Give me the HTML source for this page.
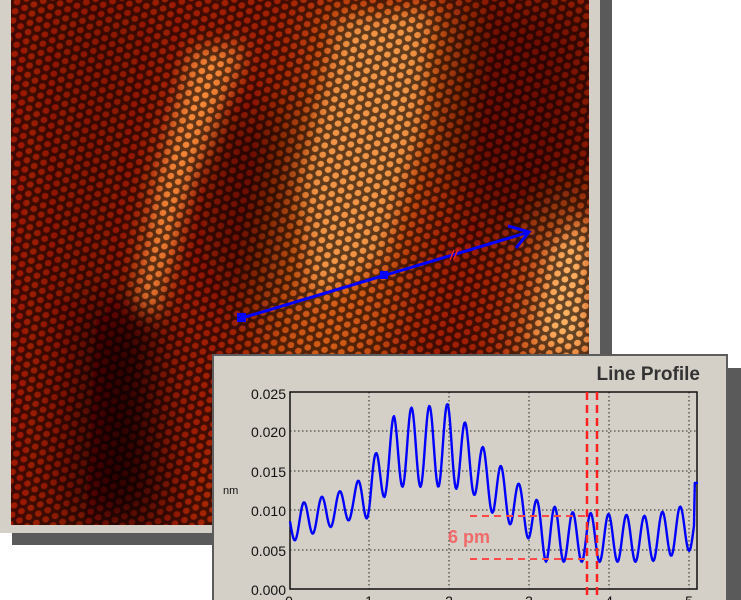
<!DOCTYPE html>
<html><head><meta charset="utf-8"><style>
html,body{margin:0;padding:0;background:#fff;width:741px;height:600px;overflow:hidden;position:relative;font-family:"Liberation Sans",sans-serif}
.a{position:absolute}
</style></head><body>
<div class="a" style="left:600px;top:0;width:12px;height:545px;background:#5a5a5a"></div>
<div class="a" style="left:12px;top:533px;width:600px;height:12px;background:#5a5a5a"></div>
<div class="a" style="left:0;top:0;width:600px;height:533px;background:#d4d0c8"></div>
<svg class="a" style="left:11px;top:0" width="578" height="525" viewBox="0 0 578 525">
<defs>
<filter id="b" x="-50%" y="-50%" width="200%" height="200%"><feGaussianBlur stdDeviation="24"/></filter>
<filter id="b2" x="-50%" y="-50%" width="200%" height="200%"><feGaussianBlur stdDeviation="10"/></filter>
<pattern id="p" width="10" height="16" patternUnits="userSpaceOnUse" patternTransform="rotate(-20)">
<path fill-rule="evenodd" fill="#000" fill-opacity="0.6" d="M0 0H10V16H0Z M1.6 4a3.4 3.1 0 1 0 6.8 0a3.4 3.1 0 1 0 -6.8 0Z M-3.4 12a3.4 3.1 0 1 0 6.8 0a3.4 3.1 0 1 0 -6.8 0Z M6.6 12a3.4 3.1 0 1 0 6.8 0a3.4 3.1 0 1 0 -6.8 0Z"/>
</pattern>
</defs>
<rect width="578" height="525" fill="#a01e02"/>
<g filter="url(#b)">
<path d="M30 0H150L120 200L90 525H30Z" fill="#8a1400"/>
<path d="M70 300L140 300L150 525L60 525Z" fill="#250000"/>
<path d="M200 120L300 100L300 300L230 320L190 250Z" fill="#6a0a00"/>
<path d="M300 0H440L420 160L380 330L330 525L210 525L260 330L290 160Z" fill="#d05a14"/>
<path d="M440 0H578V210L480 240L430 160Z" fill="#700c00"/>
<path d="M520 260L578 200V420L500 380Z" fill="#e88030"/>
</g>
<g filter="url(#b2)">
<path d="M180 50L235 45L175 200L145 320L125 300L145 180Z" fill="#f58838"/>
<path d="M330 20L420 10L410 130L370 260L300 300L290 180Z" fill="#f09444"/>
<path d="M540 250L578 215V360L525 340Z" fill="#ffb060"/>
</g>
<rect width="578" height="525" fill="url(#p)"/>
<line x1="231" y1="318" x2="515" y2="233" stroke="#0000ff" stroke-width="3"/>
<path d="M497 226L518 232L505 248" fill="none" stroke="#0000ff" stroke-width="3"/>
<rect x="226" y="313" width="9" height="9" fill="#00f"/>
<rect x="369" y="271" width="8" height="8" fill="#00f"/>
<path d="M439 260L443 250M443 259L447 249" stroke="#f02020" stroke-width="1.5"/>
</svg>
<div class="a" style="left:728px;top:368px;width:13px;height:232px;background:#5a5a5a"></div>
<div class="a" style="left:212px;top:354px;width:512px;height:246px;background:#d4d0c8;border:2px solid #5c5c5c;border-bottom:none"></div>
<div class="a" style="left:560px;top:364px;width:140px;text-align:right;font-weight:bold;font-size:19px;color:#333">Line Profile</div>
<div class="a" style="left:223px;top:485px;font-size:11px;color:#111">nm</div>
<svg class="a" style="left:212px;top:354px" width="529" height="246" viewBox="212 354 529 246" font-family="Liberation Sans, sans-serif">
<g font-size="14" fill="#111" text-anchor="end">
<text x="286" y="399">0.025</text><text x="286" y="437">0.020</text><text x="286" y="477">0.015</text>
<text x="286" y="516">0.010</text><text x="286" y="556">0.005</text><text x="286" y="595">0.000</text>
</g>
<g font-size="14" fill="#111" text-anchor="middle">
<text x="289" y="606">0</text><text x="369" y="606">1</text><text x="449" y="606">2</text><text x="529" y="606">3</text><text x="609" y="606">4</text><text x="689" y="606">5</text>
</g>
<g stroke="#222" stroke-width="1" stroke-dasharray="1.5,2.5">
<line x1="290" y1="431" x2="697" y2="431"/><line x1="290" y1="471" x2="697" y2="471"/>
<line x1="290" y1="510" x2="697" y2="510"/><line x1="290" y1="550" x2="697" y2="550"/>
<line x1="369" y1="392" x2="369" y2="589"/><line x1="449" y1="392" x2="449" y2="589"/>
<line x1="529" y1="392" x2="529" y2="589"/><line x1="609" y1="392" x2="609" y2="589"/><line x1="689" y1="392" x2="689" y2="589"/>
</g>
<rect x="290" y="392" width="407" height="197" fill="none" stroke="#111" stroke-width="1.5"/>
<polyline id="pl" fill="none" stroke="#0000ff" stroke-width="2.4" stroke-linejoin="round" points=""/>
<g stroke="#ff4848" stroke-width="2" stroke-dasharray="7,5">
<line x1="470" y1="516" x2="590" y2="516"/><line x1="470" y1="559" x2="590" y2="559"/>
</g>
<g stroke="#ff2020" stroke-width="2.5" stroke-dasharray="8,5">
<line x1="587" y1="392" x2="587" y2="600"/><line x1="597" y1="392" x2="597" y2="600"/>
</g>
<text x="469" y="543" font-size="18" font-weight="bold" fill="#f06a6a" text-anchor="middle">6 pm</text>
</svg>
<script>
function interp(t,x){for(var i=0;i<t.length-1;i++){if(x<=t[i+1][0]){var a=t[i],b=t[i+1];return a[1]+(b[1]-a[1])*(x-a[0])/(b[0]-a[0]);}}return t[t.length-1][1];}
var top_=[[0,0.0105],[0.8,0.013],[1.07,0.0172],[1.3,0.022],[1.5,0.023],[2.0,0.0235],[2.2,0.021],[2.45,0.0175],[2.65,0.0155],[2.9,0.013],[3.1,0.0112],[3.5,0.0098],[4.5,0.0093],[4.85,0.0105],[5.2,0.0105]];
var bot=[[0,0.006],[0.8,0.009],[1.0,0.009],[1.2,0.012],[1.4,0.013],[2.0,0.013],[2.3,0.012],[2.6,0.009],[2.9,0.0075],[3.2,0.0035],[4.5,0.0035],[5.2,0.0055]];
var pts=[];
for(var i=0;i<=510;i++){var x=i/100;
var t=interp(top_,x),b=interp(bot,x);
var v=(t+b)/2+(t-b)/2*Math.cos(2*Math.PI*(x-1.07)/0.224);
if(x>5.05)v=0.0135;
pts.push((290+x*80).toFixed(1)+","+(589.5-v*7900).toFixed(1));}
document.getElementById("pl").setAttribute("points",pts.join(" "));
</script>
</body></html>
